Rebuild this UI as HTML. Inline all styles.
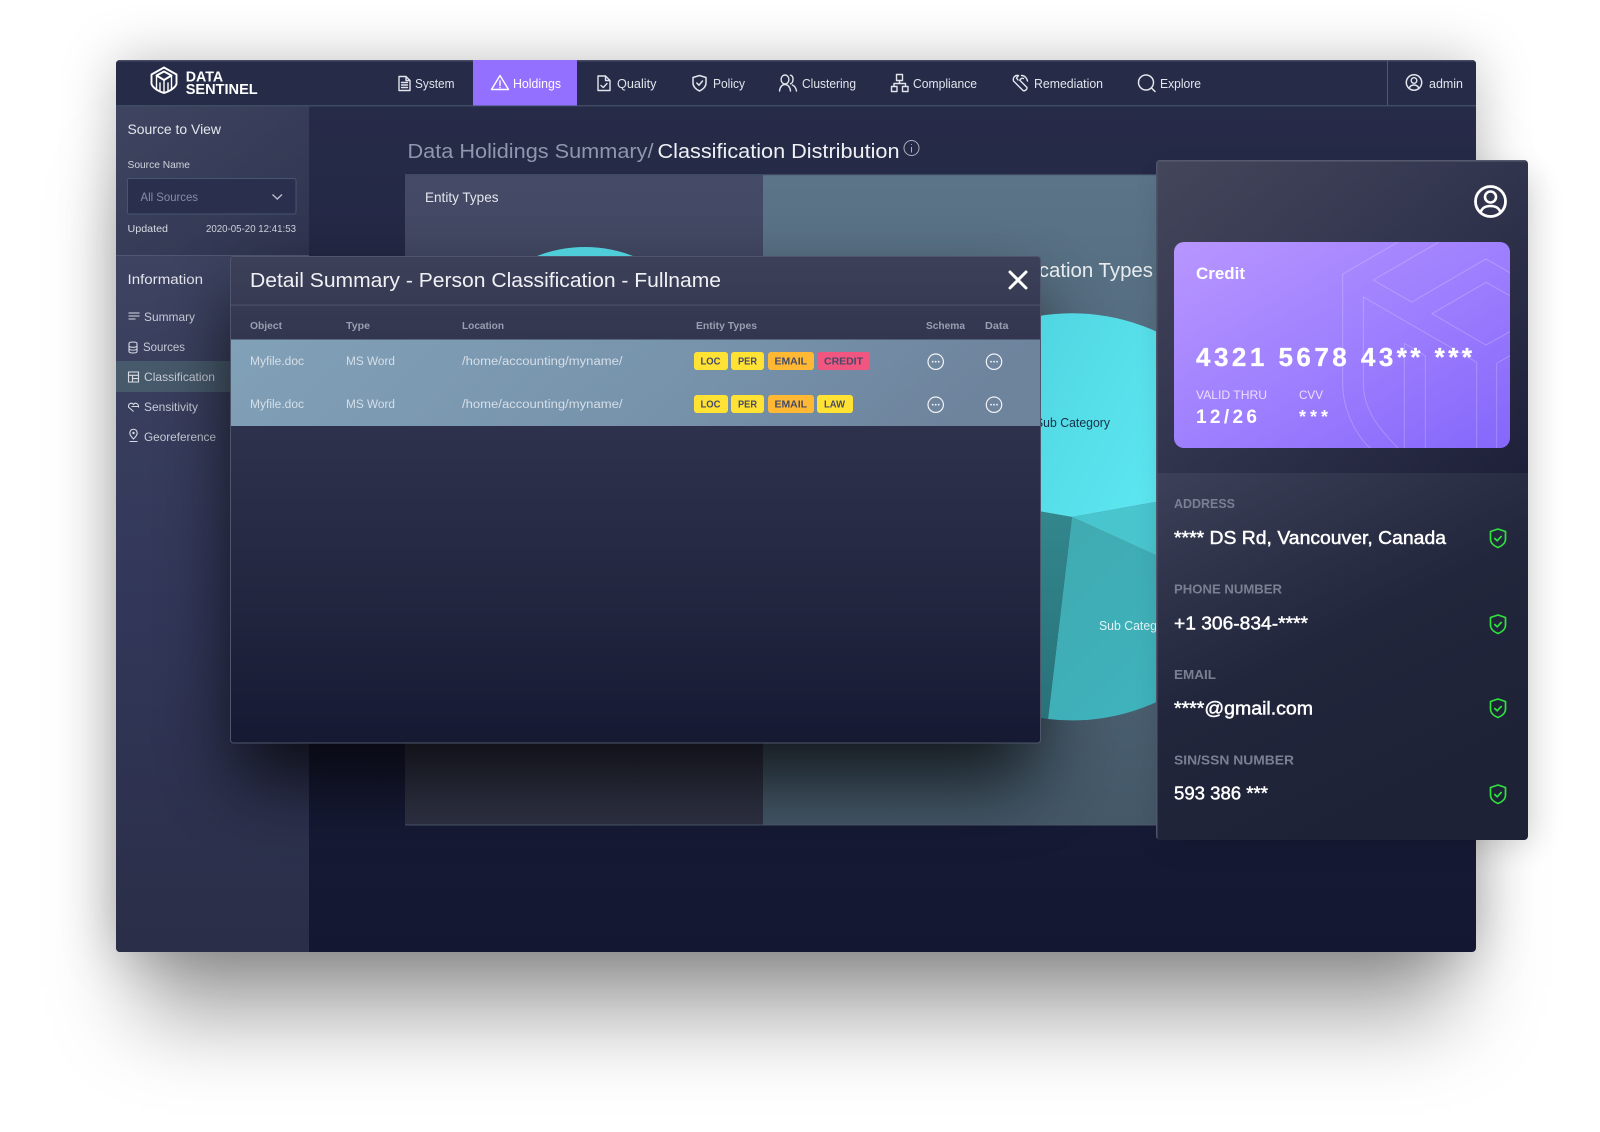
<!DOCTYPE html>
<html lang="en"><head><meta charset="utf-8"><title>Data Sentinel</title>
<style>
html,body{margin:0;padding:0;background:#fff;width:1600px;height:1132px;overflow:hidden}
#sh{position:absolute;left:116px;top:60px;width:1360px;height:892px;border-radius:4px;box-shadow:0 0 55px rgba(0,0,0,.25),0 88px 82px -24px rgba(0,0,0,.36)}
svg{position:absolute;left:0;top:0}
text{font-family:"Liberation Sans",sans-serif;white-space:pre}
.n{font-size:13px;fill:#e2e5ec}
.s{font-size:12px;fill:#c9cdd9}
.hd{font-size:10px;font-weight:bold;fill:#9b9eb1}
.c{font-size:11.5px;fill:#d6dfe8}
.b{font-size:10px;font-weight:bold;fill:#464a68}
.l{font-size:12.5px;font-weight:bold;fill:#7b7f93}
.v{font-size:18px;fill:#fff;stroke:#fff;stroke-width:.45px}
.i{fill:none;stroke:#e2e5ec;stroke-width:1.4;stroke-linecap:round;stroke-linejoin:round}
</style></head><body>
<div id="sh"></div>
<svg width="1600" height="1132" viewBox="0 0 1600 1132" xmlns="http://www.w3.org/2000/svg">
<defs>
<linearGradient id="gW" x1="0" y1="0" x2="0" y2="1"><stop offset="0" stop-color="#272c49"/><stop offset=".45" stop-color="#1f2340"/><stop offset="1" stop-color="#131731"/></linearGradient>
<linearGradient id="gS" x1="0" y1="0" x2="0" y2="1"><stop offset="0" stop-color="#3d4360"/><stop offset=".5" stop-color="#32375a"/><stop offset="1" stop-color="#2a2e47"/></linearGradient>
<linearGradient id="gS2" x1="0" y1="0" x2="1" y2="1"><stop offset="0" stop-color="#3f4560"/><stop offset="1" stop-color="#2f3450"/></linearGradient>
<linearGradient id="gE" x1="0" y1="0" x2="0" y2="1"><stop offset="0" stop-color="#454b67"/><stop offset="1" stop-color="#2f3244"/></linearGradient>
<linearGradient id="gR" x1="0" y1="0" x2="0" y2="1"><stop offset="0" stop-color="#5b7488"/><stop offset="1" stop-color="#445868"/></linearGradient>
<linearGradient id="gP1" x1="0" y1="0" x2="1" y2=".25"><stop offset="0" stop-color="#45c8d4"/><stop offset="1" stop-color="#60ebf5"/></linearGradient>
<linearGradient id="gP2" x1="0" y1="0" x2="1" y2="1"><stop offset="0" stop-color="#40aab0"/><stop offset="1" stop-color="#3eb6c1"/></linearGradient>
<linearGradient id="gP3" x1="0" y1="0" x2="0" y2="1"><stop offset="0" stop-color="#33898f"/><stop offset="1" stop-color="#29727a"/></linearGradient>
<linearGradient id="gM" x1="0" y1="0" x2="0" y2="1"><stop offset="0" stop-color="#3d4059"/><stop offset=".17" stop-color="#33364f"/><stop offset=".4" stop-color="#2d304a"/><stop offset=".7" stop-color="#22263f"/><stop offset="1" stop-color="#151932"/></linearGradient>
<linearGradient id="gRow" x1="0" y1="0" x2="1" y2=".12"><stop offset="0" stop-color="#81a1b8"/><stop offset=".6" stop-color="#7793ac"/><stop offset="1" stop-color="#6e839c"/></linearGradient>
<linearGradient id="gT" x1="0" y1="0" x2="1" y2="1"><stop offset="0" stop-color="#44465b"/><stop offset=".45" stop-color="#33364f"/><stop offset="1" stop-color="#1d2038"/></linearGradient>
<linearGradient id="gD" x1="0" y1="0" x2=".5" y2="1"><stop offset="0" stop-color="#3c4058"/><stop offset=".55" stop-color="#22263c"/><stop offset="1" stop-color="#1e2236"/></linearGradient>
<linearGradient id="gC" x1="0" y1="0" x2="1" y2="1"><stop offset="0" stop-color="#b896ff"/><stop offset=".5" stop-color="#9f80fe"/><stop offset="1" stop-color="#8567fb"/></linearGradient>
<filter id="blM" x="-30%" y="-30%" width="160%" height="160%"><feGaussianBlur stdDeviation="38"/></filter>
<filter id="blP" x="-30%" y="-30%" width="160%" height="160%"><feGaussianBlur stdDeviation="16"/></filter>
<clipPath id="cW"><rect x="116" y="60" width="1360" height="892" rx="4"/></clipPath>
<clipPath id="cC"><rect x="1174" y="242" width="336" height="206" rx="10"/></clipPath>
<clipPath id="cE"><rect x="405" y="175" width="358" height="650"/></clipPath>
<clipPath id="cP"><rect x="1156" y="160" width="372" height="680" rx="4"/></clipPath>
</defs>

<g clip-path="url(#cW)">
<rect x="116" y="60" width="1360" height="892" fill="url(#gW)"/>
<rect x="116" y="106" width="193" height="150" fill="url(#gS2)"/>
<rect x="116" y="256" width="193" height="696" fill="url(#gS)"/>
<line x1="116" y1="255.500" x2="309" y2="255.500" stroke="#4e5872"/>
<rect x="116" y="60" width="1360" height="45" fill="#262b48"/>
<rect x="116" y="60" width="1360" height="1.500" fill="#474b64"/>
<rect x="116" y="105" width="1360" height="1.500" fill="#3e4b63"/>
<rect x="473" y="60" width="104" height="45.500" fill="#9370ff"/>
<line x1="1387.500" y1="60" x2="1387.500" y2="105" stroke="#4e5a70"/>

<!-- logo -->
<g fill="none" stroke="#fff" stroke-width="1.900" stroke-linejoin="round" stroke-linecap="round">
<path d="M164 67.500 176.500 74.500V84C175 88 170 91 164 93 158 91 153 88 151.500 84V74.500Z"/>
<path d="M164 71.500 171.500 75.500 164 80 156.500 75.500Z"/>
<path d="M164 80V92M156.500 76V89M171.500 76V89M160 83V91M168 83V91" stroke-width="1.400"/>
</g>
<text x="185.700" y="81.500" font-size="15" font-weight="bold" fill="#fff" textLength="37.500" lengthAdjust="spacingAndGlyphs">DATA</text>
<text x="185.700" y="94" font-size="15" font-weight="bold" fill="#fff" textLength="72" lengthAdjust="spacingAndGlyphs">SENTINEL</text>

<!-- nav -->
<path class="i" d="M399 76.500H406L410 80.500V90.500H399Z M406 76.500V80.500H410 M401.500 82.500H407.500 M401.500 85H407.500 M401.500 87.500H407.500"/>
<text class="n" x="415" y="88" textLength="39.500" lengthAdjust="spacingAndGlyphs">System</text>
<path class="i" style="stroke:#fff" d="M500 75.500 508.500 89.500H491.500Z M500 81V85.500 M500 87.500V87.700"/>
<text class="n" style="fill:#fff" x="513" y="88" textLength="48" lengthAdjust="spacingAndGlyphs">Holdings</text>
<path class="i" d="M598 76H605.500L610 80.500V90.500H598Z M605.500 76V80.500H610 M601 85.500 603.300 87.500 607 83.500"/>
<text class="n" x="617" y="88" textLength="39.500" lengthAdjust="spacingAndGlyphs">Quality</text>
<path class="i" style="stroke-width:1.500" d="M699.500 75.500 706 77.500V83C706 86.500 703 89.500 699.500 91 696 89.500 693 86.500 693 83V77.500Z M696.800 83 699 85.200 702.500 81"/>
<text class="n" x="713" y="88" textLength="32" lengthAdjust="spacingAndGlyphs">Policy</text>
<ellipse class="i" cx="785" cy="79.500" rx="3.900" ry="4.500"/>
<path class="i" d="M779.500 91C780 87 782 84.500 785 84.500 788 84.500 790 87 790.500 91 M790.500 75.200C793.700 75.800 794 82.500 790.500 83.800 M792.300 85C795 86 796 88 796.500 91"/>
<text class="n" x="802" y="88" textLength="54" lengthAdjust="spacingAndGlyphs">Clustering</text>
<path class="i" d="M896.500 74.500H902.500V80.500H896.500Z M891.500 86.500H897V91.500H891.500Z M902.500 86.500H908V91.500H902.500Z M899.500 80.500V83.500 M894 86.500V83.500H905.500V86.500"/>
<text class="n" x="913" y="88" textLength="64" lengthAdjust="spacingAndGlyphs">Compliance</text>
<path class="i" d="M1018.500 75.500C1015 74.800 1012.500 77.500 1013.500 81L1016 83.500 1023 90.500C1024.500 91.500 1027.500 89.500 1027 87.500L1019.800 80.300C1020.500 78.500 1021.500 78 1023.500 78.500 M1018.500 75.500 1016.500 78 1018 80 M1021.500 75.500C1024.500 75.500 1027 78 1027.500 81"/>
<text class="n" x="1034" y="88" textLength="69" lengthAdjust="spacingAndGlyphs">Remediation</text>
<circle class="i" style="stroke-width:1.500" cx="1146" cy="82.500" r="7.500"/><path class="i" style="stroke-width:1.500" d="M1151.500 88 1155 91.500"/>
<text class="n" x="1160" y="88" textLength="41" lengthAdjust="spacingAndGlyphs">Explore</text>
<circle class="i" style="stroke-width:1.500" cx="1414" cy="82.500" r="7.700"/><circle class="i" cx="1414" cy="80.500" r="2.800"/><path class="i" d="M1409 88.500C1410 85.800 1412 85 1414 85 1416 85 1418 85.800 1419 88.500"/>
<text class="n" x="1429" y="88" textLength="34" lengthAdjust="spacingAndGlyphs">admin</text>

<!-- sidebar -->
<text x="127.500" y="134" font-size="13.500" fill="#e4e6ee" textLength="93.500" lengthAdjust="spacingAndGlyphs">Source to View</text>
<text x="127.500" y="168" font-size="10.500" fill="#d0d3de" textLength="62.500" lengthAdjust="spacingAndGlyphs">Source Name</text>
<rect x="127.500" y="178.500" width="168.500" height="35.500" rx="2" fill="#2a2f4e" stroke="#46566e"/>
<text x="140.500" y="201" font-size="12" fill="#878ca3" textLength="57.500" lengthAdjust="spacingAndGlyphs">All Sources</text>
<path d="M272.500 194.500 277.300 199 282 194.500" fill="none" stroke="#b8bccb" stroke-width="1.400"/>
<text x="127.500" y="232" font-size="10.500" fill="#d8dbe4" textLength="40.500" lengthAdjust="spacingAndGlyphs">Updated</text>
<text x="206" y="232" font-size="10.500" fill="#d0d3de" textLength="90" lengthAdjust="spacingAndGlyphs">2020-05-20 12:41:53</text>

<text x="127.500" y="284" font-size="13.500" fill="#e4e6ee" textLength="75.500" lengthAdjust="spacingAndGlyphs">Information</text>
<rect x="116" y="361" width="115" height="31" fill="#475a6c"/>
<path d="M128.500 313H139.500M128.500 316H139.500M128.500 319H135.500" stroke="#d8dbe4" stroke-width="1.100" fill="none"/>
<text class="s" x="144" y="321" textLength="51" lengthAdjust="spacingAndGlyphs">Summary</text>
<path d="M129 343.500C129 341.500 137 341.500 137 343.500V351.500C137 353.500 129 353.500 129 351.500Z M129 346.200C130 347.700 136 347.700 137 346.200 M129 349C130 350.500 136 350.500 137 349" fill="none" stroke="#d8dbe4" stroke-width="1.100"/>
<text class="s" x="143" y="351" textLength="42" lengthAdjust="spacingAndGlyphs">Sources</text>
<path d="M128.500 372H138.500V382H128.500Z M128.500 375.300H138.500 M132.500 375.300V382 M132.500 378.600H138.500" fill="none" stroke="#d8dbe4" stroke-width="1.100"/>
<text class="s" x="144" y="381" textLength="71" lengthAdjust="spacingAndGlyphs">Classification</text>
<path d="M133.500 411.500 128.500 407C128 403.500 132 402 133.500 404.500 135 402 139 403.500 138.500 407.500 M131.500 406.500H139" fill="none" stroke="#d8dbe4" stroke-width="1.100"/>
<text class="s" x="144" y="411" textLength="54" lengthAdjust="spacingAndGlyphs">Sensitivity</text>
<path d="M133.500 439C131 436.500 129.800 434.800 129.800 433 129.800 428 137.200 428 137.200 433 137.200 434.800 136 436.500 133.500 439Z M129.500 441.500H137.500" fill="none" stroke="#d8dbe4" stroke-width="1.100"/><circle cx="133.500" cy="433" r="1.200" fill="#d8dbe4"/>
<text class="s" x="144" y="441" textLength="72" lengthAdjust="spacingAndGlyphs">Georeference</text>

<!-- main -->
<text x="407.500" y="158" font-size="20" fill="#8e97ad" textLength="246" lengthAdjust="spacingAndGlyphs">Data Holidings Summary/</text>
<text x="657.500" y="158" font-size="20" fill="#eef0f4" textLength="242" lengthAdjust="spacingAndGlyphs">Classification Distribution</text>
<circle cx="911.500" cy="148" r="7.500" fill="none" stroke="#aab0c0" stroke-width="1"/><path d="M911.500 147V152.500M911.500 144V144.900" stroke="#aab0c0" fill="none"/>

<rect x="405" y="175" width="358" height="650" fill="url(#gE)"/>
<rect x="763" y="175" width="420" height="650" fill="url(#gR)"/>
<rect x="405" y="174" width="778" height="1.200" fill="#3d4a60"/>
<rect x="405" y="824.500" width="778" height="1" fill="#4c5a6c"/>
<text x="425" y="202" font-size="14" fill="#e4e6ee" textLength="73.500" lengthAdjust="spacingAndGlyphs">Entity Types</text>

<!-- modal shadow -->
<rect x="235" y="300" width="800" height="480" fill="#000" opacity=".75" filter="url(#blM)"/>

<circle cx="585" cy="379" r="132" fill="#4fcdd8" clip-path="url(#cE)"/>
<path d="M1072 517 872 482A203 203 0 0 1 1272 481Z" fill="url(#gP1)"/>
<path d="M1072 517 1272 481A203 203 0 0 1 1257 601Z" fill="#49c5ce"/>
<path d="M1072 517 1257 601A203 203 0 0 1 1048 719Z" fill="url(#gP2)"/>
<path d="M1072 517 1048 719A203 203 0 0 1 872 482Z" fill="url(#gP3)"/>
<text x="973" y="277" font-size="20" fill="#e8ecf0" textLength="180" lengthAdjust="spacingAndGlyphs">Classification Types</text>
<text x="1035" y="427" font-size="13" fill="#17304a" textLength="75" lengthAdjust="spacingAndGlyphs">Sub Category</text>
<text x="1099" y="630" font-size="13" fill="#dff4f6" textLength="75" lengthAdjust="spacingAndGlyphs">Sub Category</text>
</g>

<!-- modal -->
<rect x="230.500" y="256.500" width="810" height="486.500" rx="3" fill="url(#gM)" stroke="#4f566b"/>
<rect x="231" y="304.500" width="809" height="1.200" fill="#4a5067"/>
<text x="250" y="287" font-size="20" fill="#f0f1f5" textLength="471" lengthAdjust="spacingAndGlyphs">Detail Summary - Person Classification - Fullname</text>
<path d="M1010 272 1026 288M1026 272 1010 288" stroke="#fff" stroke-width="3" stroke-linecap="round"/>
<text class="hd" x="250" y="329" textLength="32" lengthAdjust="spacingAndGlyphs">Object</text>
<text class="hd" x="346" y="329" textLength="24" lengthAdjust="spacingAndGlyphs">Type</text>
<text class="hd" x="462" y="329" textLength="42" lengthAdjust="spacingAndGlyphs">Location</text>
<text class="hd" x="696" y="329" textLength="61" lengthAdjust="spacingAndGlyphs">Entity Types</text>
<text class="hd" x="926" y="329" textLength="39" lengthAdjust="spacingAndGlyphs">Schema</text>
<text class="hd" x="985" y="329" textLength="23.500" lengthAdjust="spacingAndGlyphs">Data</text>
<rect x="231" y="339.500" width="809" height="86.500" fill="url(#gRow)"/>

<text class="c" x="250" y="365" textLength="54" lengthAdjust="spacingAndGlyphs">Myfile.doc</text>
<text class="c" x="346" y="365" textLength="49" lengthAdjust="spacingAndGlyphs">MS Word</text>
<text class="c" x="462" y="365" textLength="160.500" lengthAdjust="spacingAndGlyphs">/home/accounting/myname/</text>
<text class="c" x="250" y="408" textLength="54" lengthAdjust="spacingAndGlyphs">Myfile.doc</text>
<text class="c" x="346" y="408" textLength="49" lengthAdjust="spacingAndGlyphs">MS Word</text>
<text class="c" x="462" y="408" textLength="160.500" lengthAdjust="spacingAndGlyphs">/home/accounting/myname/</text>

<rect x="694" y="352" width="34" height="18" rx="3" fill="#ffe234"/>
<rect x="731" y="352" width="33" height="18" rx="3" fill="#ffe234"/>
<rect x="768" y="352" width="46" height="18" rx="3" fill="#ffb833"/>
<rect x="817" y="352" width="53" height="18" rx="3" fill="#f0567f"/>
<text class="b" x="700.500" y="364.500" textLength="20" lengthAdjust="spacingAndGlyphs">LOC</text>
<text class="b" x="738" y="364.500" textLength="19" lengthAdjust="spacingAndGlyphs">PER</text>
<text class="b" x="774.500" y="364.500" textLength="32.500" lengthAdjust="spacingAndGlyphs">EMAIL</text>
<text class="b" x="824" y="364.500" textLength="39" lengthAdjust="spacingAndGlyphs">CREDIT</text>
<rect x="694" y="395" width="34" height="18" rx="3" fill="#ffe234"/>
<rect x="731" y="395" width="33" height="18" rx="3" fill="#ffe234"/>
<rect x="768" y="395" width="46" height="18" rx="3" fill="#ffb833"/>
<rect x="817" y="395" width="36" height="18" rx="3" fill="#ffe234"/>
<text class="b" x="700.500" y="407.500" textLength="20" lengthAdjust="spacingAndGlyphs">LOC</text>
<text class="b" x="738" y="407.500" textLength="19" lengthAdjust="spacingAndGlyphs">PER</text>
<text class="b" x="774.500" y="407.500" textLength="32.500" lengthAdjust="spacingAndGlyphs">EMAIL</text>
<text class="b" x="824" y="407.500" textLength="21" lengthAdjust="spacingAndGlyphs">LAW</text>

<g fill="none" stroke="#f2f4f7" stroke-width="1.200">
<circle cx="935.700" cy="361.700" r="7.700"/><circle cx="994" cy="361.700" r="7.700"/>
<circle cx="935.700" cy="404.700" r="7.700"/><circle cx="994" cy="404.700" r="7.700"/>
</g>
<g fill="#f2f4f7">
<circle cx="932.700" cy="361.700" r=".9"/><circle cx="935.700" cy="361.700" r=".9"/><circle cx="938.700" cy="361.700" r=".9"/>
<circle cx="991" cy="361.700" r=".9"/><circle cx="994" cy="361.700" r=".9"/><circle cx="997" cy="361.700" r=".9"/>
<circle cx="932.700" cy="404.700" r=".9"/><circle cx="935.700" cy="404.700" r=".9"/><circle cx="938.700" cy="404.700" r=".9"/>
<circle cx="991" cy="404.700" r=".9"/><circle cx="994" cy="404.700" r=".9"/><circle cx="997" cy="404.700" r=".9"/>
</g>

<!-- side panel -->
<rect x="1165" y="175" width="368" height="668" fill="#000" opacity=".16" filter="url(#blP)"/>
<g clip-path="url(#cP)">
<rect x="1156" y="160" width="372" height="313" fill="url(#gT)"/>
<rect x="1156" y="473" width="372" height="367" fill="url(#gD)"/>
<rect x="1156" y="160" width="372" height="1.500" fill="#565a6e"/>
<rect x="1156" y="160" width="1.500" height="680" fill="#50546a"/>
</g>

<circle cx="1490.500" cy="201.500" r="15" fill="none" stroke="#fff" stroke-width="2.800"/>
<circle cx="1490.500" cy="197" r="5.500" fill="none" stroke="#fff" stroke-width="2.600"/>
<path d="M1480.500 212.500C1482 207.500 1486 206 1490.500 206 1495 206 1499 207.500 1500.500 212.500" fill="none" stroke="#fff" stroke-width="2.600"/>

<rect x="1174" y="242" width="336" height="206" rx="10" fill="url(#gC)"/>
<g clip-path="url(#cC)"><g transform="translate(1130 150) scale(.33333)" fill="none" stroke="#fff" stroke-opacity=".22" stroke-width="3">
<path d="M803 277 638 372V700C638 780 680 860 722 895"/>
<path d="M925 277 730 390 845 456 1068 327 1140 368"/>
<path d="M1140 437 1068 397 906 491 1068 585 1140 545"/>
<path d="M805 895C750 840 700 780 700 700V441L1040 637V895"/>
<path d="M1100 895V640L1140 617"/>
<path d="M823 895V580L886 617V895"/>
</g></g>
<text x="1196" y="279" font-size="16.500" font-weight="bold" fill="#fff" textLength="49" lengthAdjust="spacingAndGlyphs">Credit</text>
<text x="1196" y="366" font-size="26" font-weight="bold" fill="#fff" stroke="#fff" stroke-width=".3" textLength="276" lengthAdjust="spacing">4321 5678 43** ***</text>
<text x="1196" y="399" font-size="12" fill="#e9e0ff" textLength="71" lengthAdjust="spacingAndGlyphs">VALID THRU</text>
<text x="1299" y="399" font-size="12" fill="#e9e0ff" textLength="24" lengthAdjust="spacingAndGlyphs">CVV</text>
<text x="1196" y="423" font-size="19" font-weight="bold" fill="#fff" textLength="61" lengthAdjust="spacing">12/26</text>
<text x="1299" y="423" font-size="18" font-weight="bold" fill="#fff" textLength="29" lengthAdjust="spacing">***</text>

<text class="l" x="1174" y="508" textLength="61" lengthAdjust="spacingAndGlyphs">ADDRESS</text>
<text class="v" x="1174" y="544" textLength="272" lengthAdjust="spacingAndGlyphs">**** DS Rd, Vancouver, Canada</text>
<text class="l" x="1174" y="593.500" textLength="108" lengthAdjust="spacingAndGlyphs">PHONE NUMBER</text>
<text class="v" x="1174" y="629.500" textLength="134" lengthAdjust="spacingAndGlyphs">+1 306-834-****</text>
<text class="l" x="1174" y="679" textLength="42" lengthAdjust="spacingAndGlyphs">EMAIL</text>
<text class="v" x="1174" y="714.500" textLength="139" lengthAdjust="spacingAndGlyphs">****@gmail.com</text>
<text class="l" x="1174" y="764.500" textLength="120" lengthAdjust="spacingAndGlyphs">SIN/SSN NUMBER</text>
<text class="v" x="1174" y="799.500" textLength="94" lengthAdjust="spacingAndGlyphs">593 386 ***</text>

<g fill="none" stroke="#2fe33c" stroke-width="1.700" stroke-linejoin="round" stroke-linecap="round">
<path d="M1498 529 1505.500 531.500V539C1505.500 543 1502 546 1498 547.500 1494 546 1490.500 543 1490.500 539V531.500Z M1494.800 538.500 1497.200 540.800 1501.200 536.500"/>
<path d="M1498 615 1505.500 617.500V625C1505.500 629 1502 632 1498 633.500 1494 632 1490.500 629 1490.500 625V617.500Z M1494.800 624.500 1497.200 626.800 1501.200 622.500"/>
<path d="M1498 699 1505.500 701.500V709C1505.500 713 1502 716 1498 717.500 1494 716 1490.500 713 1490.500 709V701.500Z M1494.800 708.500 1497.200 710.800 1501.200 706.500"/>
<path d="M1498 785 1505.500 787.500V795C1505.500 799 1502 802 1498 803.500 1494 802 1490.500 799 1490.500 795V787.500Z M1494.800 794.500 1497.200 796.800 1501.200 792.500"/>
</g>
</svg>
</body></html>
